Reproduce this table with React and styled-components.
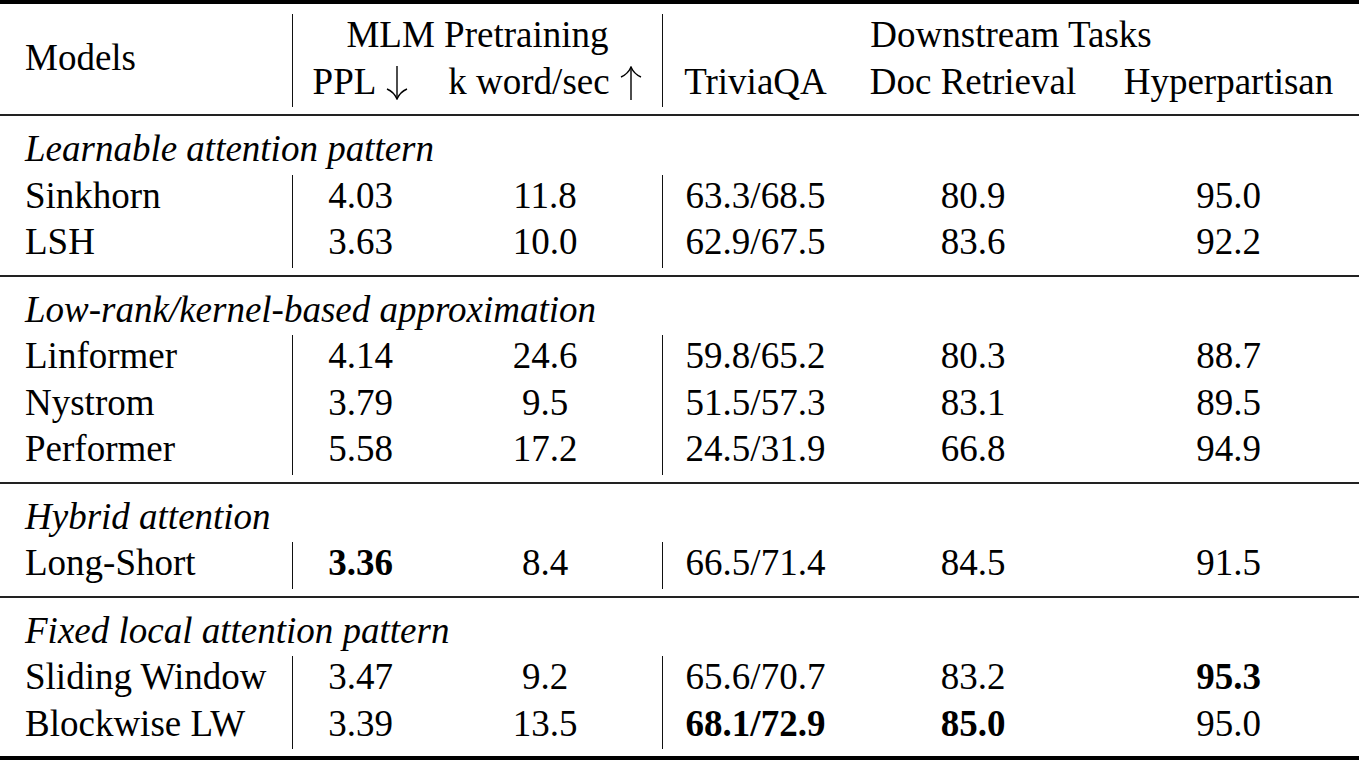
import React from 'react';
import styled, { createGlobalStyle } from 'styled-components';

const GlobalStyle = createGlobalStyle`
  html, body {
    margin: 0;
    padding: 0;
    background: #ffffff;
    color: #000000;
  }
`;

const COLS = '292px 136px 234px 186px 250px 261px';
const ROW_H = 46.5;

const Table = styled.div`
  width: 1359px;
  display: flex;
  flex-direction: column;
  font-family: "Liberation Serif", "Times New Roman", Times, "DejaVu Serif", serif;
  font-size: 37px;
`;

const Rule = styled.div`
  height: ${(p) => (p.$heavy ? '4px' : '2px')};
  background: ${(p) => (p.$heavy ? '#000' : '#222')};
  margin-top: ${(p) => p.$above || 0}px;
  margin-bottom: ${(p) => p.$below || 0}px;
`;

const Header = styled.div`
  display: grid;
  grid-template-columns: ${COLS};
  grid-template-rows: ${ROW_H}px ${ROW_H}px;
`;

// text sits ~2px above the box centre, as in the typeset original
const Cell = styled.div`
  height: ${ROW_H}px;
  line-height: ${ROW_H - 4}px;
  white-space: nowrap;
  text-align: ${(p) => (p.$left ? 'left' : 'center')};
  padding-left: ${(p) => (p.$left ? '25px' : '0')};
  border-left: ${(p) => (p.$bar ? '1px solid #111' : 'none')};
  font-weight: ${(p) => (p.$bold ? 700 : 400)};
  grid-column: ${(p) => p.$span || 'auto'};
  grid-row: ${(p) => p.$row || 'auto'};
`;

const ModelsCell = styled(Cell)`
  height: auto;
  display: flex;
  align-items: center;
  padding-bottom: 4px;
  grid-row: 1 / 3;
`;

const Arrow = styled.svg`
  width: 22px;
  height: 34px;
  margin-left: 10px;
  vertical-align: -6px;
`;

const Group = styled.div`
  display: flex;
  flex-direction: column;
`;

const SectionTitle = styled.div`
  height: ${ROW_H}px;
  line-height: ${ROW_H - 4}px;
  padding-left: 25px;
  font-style: italic;
  white-space: nowrap;
`;

const Row = styled.div`
  display: grid;
  grid-template-columns: ${COLS};
`;

const DownArrow = () => (
  <Arrow viewBox="0 0 22 34" fill="none" stroke="#000" strokeWidth="1.4">
    <path d="M11 0 V33" />
    <path d="M1 23 Q8 26 11 33 Q14 26 21 23" />
  </Arrow>
);

const UpArrow = () => (
  <Arrow viewBox="0 0 22 34" fill="none" stroke="#000" strokeWidth="1.4">
    <path d="M11 1 V34" />
    <path d="M1 11 Q8 8 11 1 Q14 8 21 11" />
  </Arrow>
);

const groups = [
  {
    title: 'Learnable attention pattern',
    rows: [
      ['Sinkhorn', '4.03', '11.8', '63.3/68.5', '80.9', '95.0'],
      ['LSH', '3.63', '10.0', '62.9/67.5', '83.6', '92.2'],
    ],
  },
  {
    title: 'Low-rank/kernel-based approximation',
    rows: [
      ['Linformer', '4.14', '24.6', '59.8/65.2', '80.3', '88.7'],
      ['Nystrom', '3.79', '9.5', '51.5/57.3', '83.1', '89.5'],
      ['Performer', '5.58', '17.2', '24.5/31.9', '66.8', '94.9'],
    ],
  },
  {
    title: 'Hybrid attention',
    rows: [['Long-Short', '3.36', '8.4', '66.5/71.4', '84.5', '91.5']],
    bold: [[0, 1]],
  },
  {
    title: 'Fixed local attention pattern',
    rows: [
      ['Sliding Window', '3.47', '9.2', '65.6/70.7', '83.2', '95.3'],
      ['Blockwise LW', '3.39', '13.5', '68.1/72.9', '85.0', '95.0'],
    ],
    bold: [[0, 5], [1, 3], [1, 4]],
  },
];

const isBold = (g, r, c) => (g.bold || []).some(([br, bc]) => br === r && bc === c);

const App = () => {
  return (
    <>
      <GlobalStyle />
      <Table>
        <Rule $heavy $below={10} />
        <Header>
          <ModelsCell $left>Models</ModelsCell>
          <Cell $bar $span="2 / 4" $row="1">MLM Pretraining</Cell>
          <Cell $bar $span="4 / 7" $row="1">Downstream Tasks</Cell>
          <Cell $bar $row="2">
            PPL<DownArrow />
          </Cell>
          <Cell $row="2">
            k word/sec<UpArrow />
          </Cell>
          <Cell $bar $row="2">TriviaQA</Cell>
          <Cell $row="2">Doc Retrieval</Cell>
          <Cell $row="2">Hyperpartisan</Cell>
        </Header>
        {groups.map((g) => (
          <Group key={g.title}>
            <Rule $above={7} $below={12} />
            <SectionTitle>{g.title}</SectionTitle>
            {g.rows.map((r, ri) => (
              <Row key={r[0]}>
                {r.map((v, ci) => (
                  <Cell
                    key={ci}
                    $left={ci === 0}
                    $bar={ci === 1 || ci === 3}
                    $bold={isBold(g, ri, ci)}
                  >
                    {v}
                  </Cell>
                ))}
              </Row>
            ))}
          </Group>
        ))}
        <Rule $heavy $above={7} />
      </Table>
    </>
  );
};

export default App;
